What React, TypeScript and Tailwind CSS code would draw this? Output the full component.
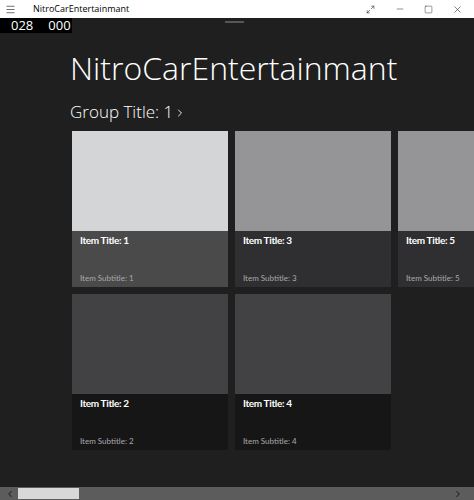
import { Menu, Minus, Square, X, Maximize2, ChevronLeft, ChevronRight } from 'lucide-react'

type Item = { id: number; img: string; body: string }

const ITEMS: Item[] = [
  { id: 1, img: 'bg-[#d4d5d7]', body: 'bg-[#4a4a4b]' },
  { id: 2, img: 'bg-[#424244]', body: 'bg-[#161617]' },
  { id: 3, img: 'bg-[#959598]', body: 'bg-[#2f2f31]' },
  { id: 4, img: 'bg-[#424244]', body: 'bg-[#161617]' },
  { id: 5, img: 'bg-[#959598]', body: 'bg-[#2f2f31]' },
]

function Card({ item }: { item: Item }) {
  return (
    <div className="w-[156px] h-[156px] flex flex-col shrink-0 font-['Lato',sans-serif]">
      <div className={`h-[100px] ${item.img}`} />
      <div className={`flex-1 ${item.body} flex flex-col justify-between px-[8px] pt-[2px] pb-[3px]`}>
        <div className="text-[10px] font-bold text-white tracking-[-0.35px]">Item Title: {item.id}</div>
        <div className="text-[8px] text-[#a9a9a9]">Item Subtitle: {item.id}</div>
      </div>
    </div>
  )
}

export default function App() {
  return (
    <div className="w-[474px] h-[500px] flex flex-col overflow-hidden bg-[#1f1f1f] font-['Open_Sans',sans-serif]">
      <div className="h-[18px] bg-white flex items-center shrink-0">
        <Menu size={11} strokeWidth={1.5} className="ml-[5px] text-[#333]" />
        <span className="ml-[17px] text-[9px] text-black">NitroCarEntertainmant</span>
        <div className="ml-auto flex items-center text-[#222]">
          <div className="w-[29px] flex justify-center">
            <Maximize2 size={9} strokeWidth={1.5} />
          </div>
          <div className="w-[29px] flex justify-center">
            <Minus size={10} strokeWidth={1.2} />
          </div>
          <div className="w-[29px] flex justify-center">
            <Square size={9} strokeWidth={1.2} />
          </div>
          <div className="w-[29px] flex justify-center mr-[2px]">
            <X size={11} strokeWidth={1.2} />
          </div>
        </div>
      </div>

      <div className="relative flex-1 flex flex-col min-h-0">
        <div className="absolute left-0 top-0 w-[72px] h-[15px] bg-black text-white text-[13px] leading-[15px] flex gap-[15px] pl-[11px]">
          <span>028</span>
          <span>000</span>
        </div>
        <div className="absolute left-[225px] top-[3px] w-[19px] h-[2px] bg-[#555]" />

        <div className="pl-[70px] pt-[30px] flex-1 min-h-0">
          <h1 className="text-[32px] font-light text-white leading-[40px]">NitroCarEntertainmant</h1>
          <div className="mt-[13px] text-[17px] font-light text-white leading-[22px] flex items-center">
            Group Title: 1
            <ChevronRight size={12} strokeWidth={1.8} className="ml-[1px] mt-[2px]" />
          </div>
          <div className="mt-[8px] ml-[2px] grid grid-rows-2 grid-flow-col auto-cols-[156px] gap-[7px]">
            {ITEMS.map((it) => (
              <Card key={it.id} item={it} />
            ))}
          </div>
        </div>

        <div className="h-[13px] bg-[#5c5c5c] flex items-center shrink-0">
          <ChevronLeft size={10} strokeWidth={2.5} className="ml-[5px] text-[#222]" />
          <div className="ml-[3px] w-[61px] h-[11px] bg-[#d8d8d8]" />
          <ChevronRight size={10} strokeWidth={2.5} className="ml-auto mr-[11px] text-[#222]" />
        </div>
      </div>
    </div>
  )
}
